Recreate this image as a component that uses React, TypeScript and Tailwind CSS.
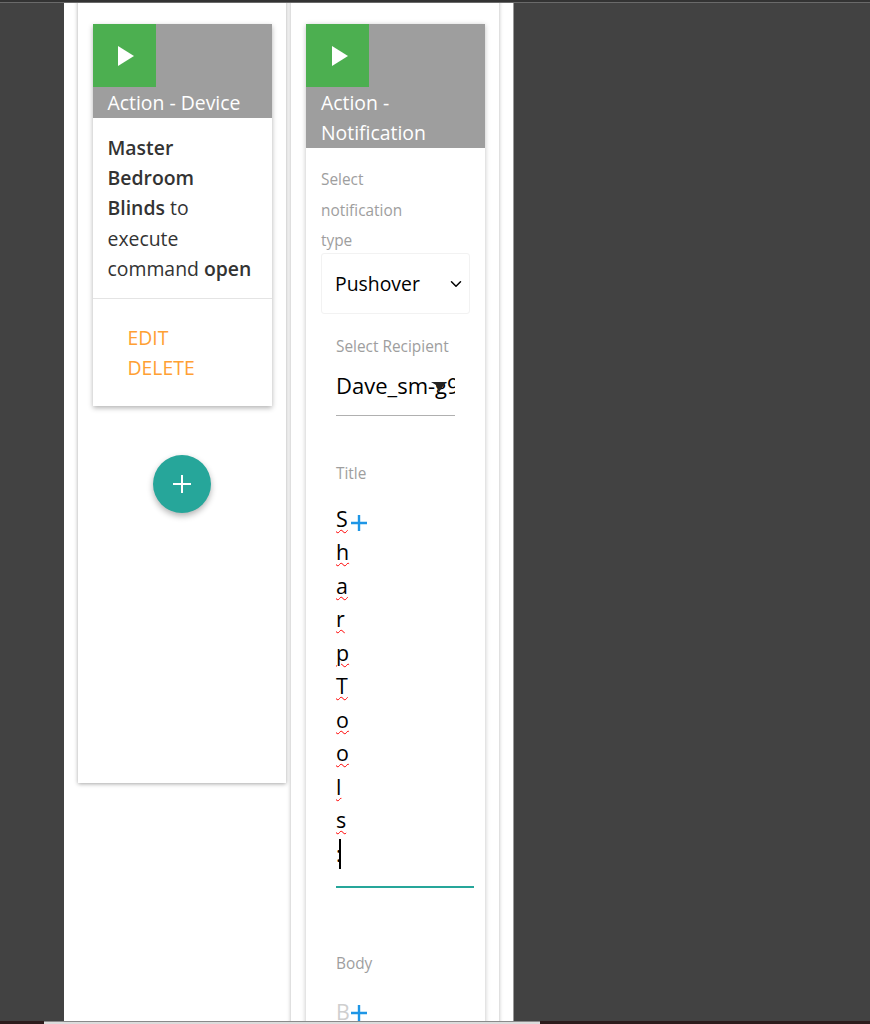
import { ChevronDown } from "lucide-react";

const FONT = "font-['Open_Sans','Noto_Sans',sans-serif]";

const TITLE_LETTERS = ["S", "h", "a", "r", "p", "T", "o", "o", "l", "s"];

function BluePlus({ className }: { className: string }) {
  return (
    <svg className={`absolute ${className}`} width="18" height="18" viewBox="0 0 18 18">
      <path d="M9 1v16M1 9h16" stroke="#1e96e6" strokeWidth="2.4" fill="none" />
    </svg>
  );
}

function CardHeader({ lines }: { lines: string[] }) {
  return (
    <div className="bg-[#9e9e9e] text-white">
      <div className="flex h-[63px] w-[63px] items-center justify-center bg-[#4caf50]">
        <svg width="18" height="20" viewBox="0 0 18 20" className="ml-[4px]">
          <path d="M1 0l16 10L1 20z" fill="#fff" />
        </svg>
      </div>
      <div className="px-[15px] pt-[1px] text-[19.4px] leading-[30px]">
        {lines.map((l) => (
          <div key={l}>{l}</div>
        ))}
      </div>
    </div>
  );
}

function DeviceCard() {
  return (
    <div className="w-[179px] bg-white shadow-[0_2px_5px_0_rgba(0,0,0,0.3)]">
      <CardHeader lines={["Action - Device"]} />
      <div className="px-[15px] pb-[14px] pt-[15px] text-[19.4px] leading-[30.2px] text-[#333]">
        <span className="font-semibold">
          Master
          <br />
          Bedroom
          <br />
          Blinds
        </span>{" "}
        to
        <br />
        execute
        <br />
        command <span className="font-semibold">open</span>
      </div>
      <div className="border-t border-[#e4e4e4] pb-[22px] pl-[35px] pt-[24px] text-[19.4px] leading-[30.4px] text-[#ffa033]">
        <div>EDIT</div>
        <div>DELETE</div>
      </div>
    </div>
  );
}

function NotificationCard() {
  return (
    <div className="h-[1100px] w-[179px] bg-white shadow-[0_1px_5px_0_rgba(0,0,0,0.25)]">
      <CardHeader lines={["Action -", "Notification"]} />
      <div className="px-[15px] pt-[17px]">
        <div className="text-[15.4px] leading-[30.6px] text-[#9e9e9e]">
          Select
          <br />
          notification
          <br />
          type
        </div>
        <div className="mt-[-4px] flex h-[61px] w-[149px] items-center justify-between rounded-[3px] border border-[#f2f2f2] pl-[13px] pr-[4px] pt-[1px] text-[19.4px] text-black">
          Pushover
          <ChevronDown size={18} strokeWidth={2} className="text-black" />
        </div>
        <div className="relative mt-[18px] pl-[15px]">
          <div className="text-[15.4px] leading-[30px] text-[#9e9e9e]">Select Recipient</div>
          <div className="mt-[8px] h-[46px] w-[119px] overflow-hidden whitespace-nowrap border-b border-[#b0b0b0] text-[22px] leading-[30px] text-black">
            Dave_sm-g9
          </div>
          <svg className="absolute left-[110px] top-[50px]" width="16" height="12" viewBox="0 0 16 12">
            <path d="M0 0h15L8 10 5 3z" fill="#222" />
          </svg>
          <div className="mt-[43px] text-[15.4px] leading-[30px] text-[#9e9e9e]">Title</div>
          <div className="relative mt-[13px] w-[138px] border-b-2 border-[#26a69a] pb-[16px] text-[21.4px] leading-[33.5px] text-black">
            {TITLE_LETTERS.map((c, i) => (
              <div key={i}>
                <span className="underline decoration-[#f00] decoration-wavy decoration-1 underline-offset-2">{c}</span>
              </div>
            ))}
            <div className="relative h-[33.5px]">
              :
              <span className="absolute left-[3px] top-[2px] h-[30px] w-[2px] bg-black" />
            </div>
            <BluePlus className="left-[14px] top-[12px]" />
          </div>
          <div className="mt-[61px] text-[15.4px] leading-[30px] text-[#9e9e9e]">Body</div>
          <div className="relative mt-[16px] text-[21.4px] leading-[33.5px] text-[#cfcfcf]">
            B
            <BluePlus className="left-[14px] top-[9px]" />
          </div>
        </div>
      </div>
    </div>
  );
}

export default function App() {
  return (
    <div className={`flex h-screen flex-col overflow-hidden bg-[#424242] ${FONT}`}>
      <div className="h-[3px] flex-none border-b border-[#6a6a6a] bg-[#333]" />
      <div className="ml-[64px] flex min-h-0 w-[450px] flex-1 overflow-hidden border-r border-black/40 bg-white pl-[14px]">
        <div className="mt-[-10px] flex h-[790px] w-[208px] flex-none flex-col items-center bg-white pt-[31px] shadow-[0_1px_4px_0_rgba(0,0,0,0.35)]">
          <DeviceCard />
          <button className="mt-[49px] flex h-[58px] w-[58px] items-center justify-center rounded-full bg-[#26a69a] shadow-[0_3px_6px_rgba(0,0,0,0.3)]">
            <svg width="20" height="20" viewBox="0 0 20 20">
              <path d="M10 1v18M1 10h18" stroke="#fff" strokeWidth="2" fill="none" />
            </svg>
          </button>
        </div>
        <div className="ml-[5px] mt-[-10px] h-[1200px] w-[208px] flex-none bg-white pl-[15px] pt-[31px] shadow-[0_1px_4px_0_rgba(0,0,0,0.3)]">
          <NotificationCard />
        </div>
      </div>
      <div className="flex h-[3px] flex-none bg-[#2c1c1c]">
        <div className="ml-[44px] h-full w-[496px] border-t border-[#8a8a8a] bg-[#dcdcdc]" />
      </div>
    </div>
  );
}
